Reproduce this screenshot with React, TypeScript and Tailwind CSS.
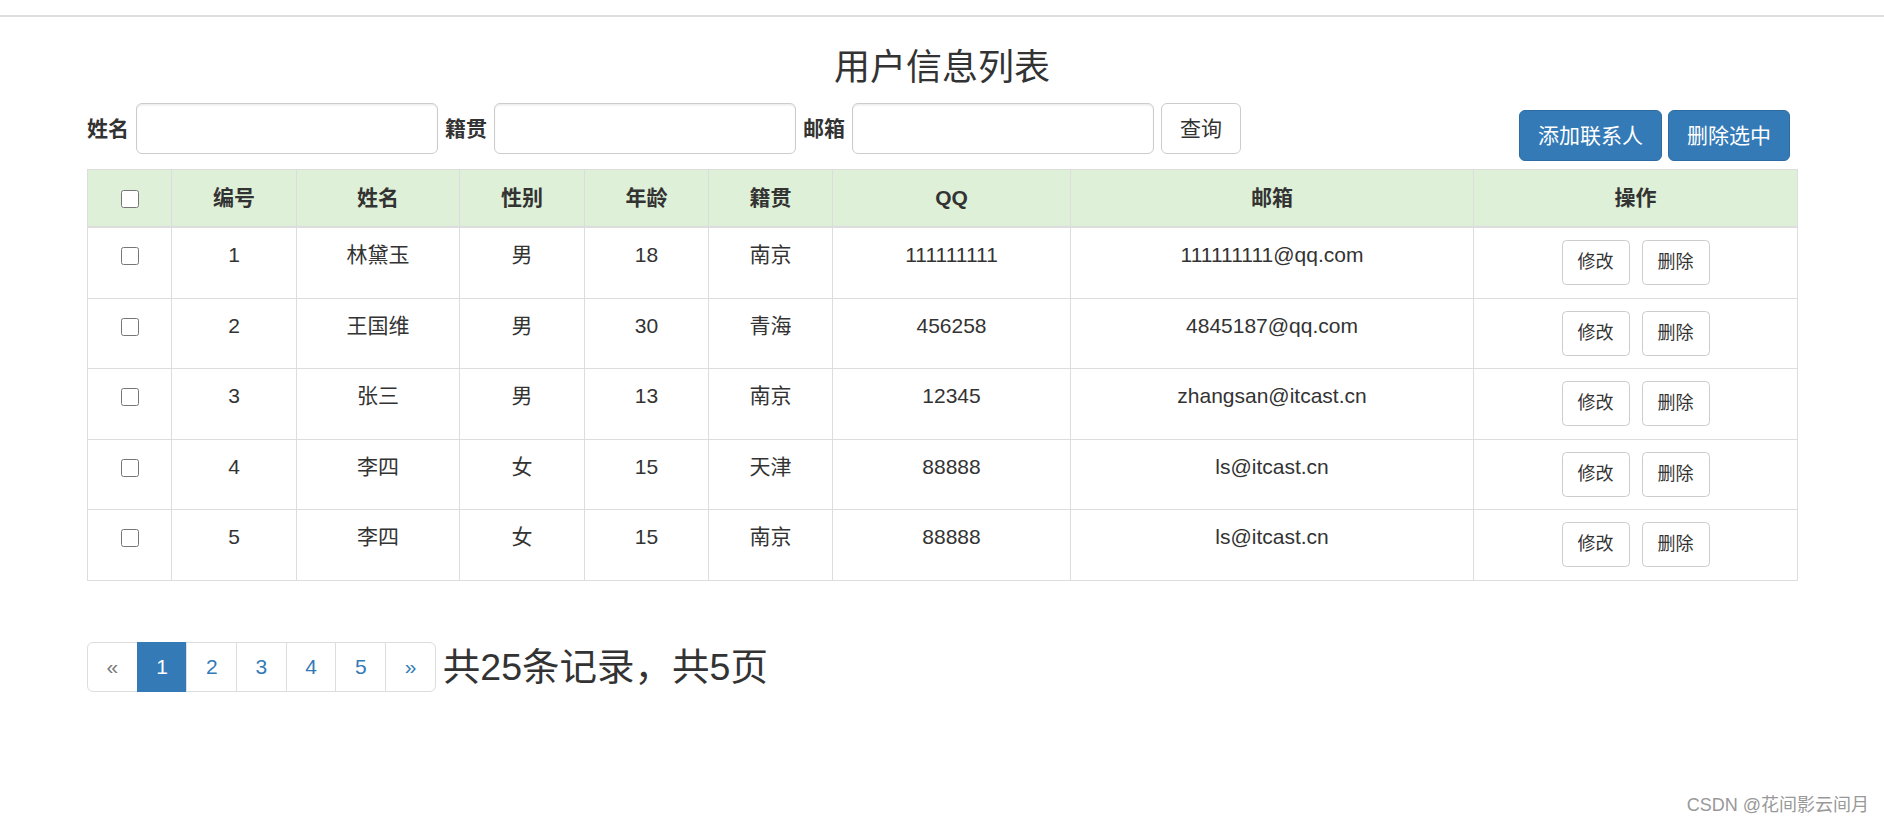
import React from "react";

const users = [
  { id: 1, name: "林黛玉", gender: "男", age: 18, address: "南京", qq: "111111111", email: "111111111@qq.com" },
  { id: 2, name: "王国维", gender: "男", age: 30, address: "青海", qq: "456258", email: "4845187@qq.com" },
  { id: 3, name: "张三", gender: "男", age: 13, address: "南京", qq: "12345", email: "zhangsan@itcast.cn" },
  { id: 4, name: "李四", gender: "女", age: 15, address: "天津", qq: "88888", email: "ls@itcast.cn" },
  { id: 5, name: "李四", gender: "女", age: 15, address: "南京", qq: "88888", email: "ls@itcast.cn" },
];

const colWidths = ["w-[84px]", "w-[125px]", "w-[163px]", "w-[125px]", "w-[124px]", "w-[124px]", "w-[238px]", "w-[403px]", "w-[324px]"];

function Field({ label }: { label: string }) {
  return (
    <>
      <label className="font-bold mr-[7px]">{label}</label>
      <input
        type="text"
        className="w-[302px] h-[51px] mr-[7px] border border-[#ccc] rounded-[6px] bg-white px-[18px] shadow-[inset_0_1.5px_1.5px_rgba(0,0,0,0.075)] outline-none"
      />
    </>
  );
}

export default function App() {
  const th = "border border-[#ddd] border-b-2 pt-[13px] pb-[13px] px-3 font-bold text-center align-bottom";
  const td = "border border-[#ddd] px-3 pt-3 pb-[12.5px] text-center align-top";
  const page = "h-[50px] px-[18.5px] py-[9px] border";

  return (
    <div className="relative min-h-screen bg-white text-[#333] text-[21px] leading-[30px] font-['Liberation_Sans','Noto_Sans_CJK_SC',sans-serif]">
      <div className="h-[17px] border-b-2 border-[#dedede]" />

      <div className="w-[1710px] mx-auto">
        <h3 className="mt-[31px] mb-[15px] text-[36px] leading-[40px] text-center font-normal">用户信息列表</h3>

        <div className="flex items-start justify-between">
          <form className="flex items-center h-[51px]">
            <Field label="姓名" />
            <Field label="籍贯" />
            <Field label="邮箱" />
            <button
              type="button"
              className="h-[51px] px-[18px] border border-[#ccc] rounded-[6px] bg-white text-[#333]"
            >
              查询
            </button>
          </form>

          <div className="flex gap-[6px] mt-[7px] mb-[8px] mr-[7px]">
            <button className="h-[51px] px-[18px] rounded-[6px] border border-[#2e6da4] bg-[#337ab7] text-white">
              添加联系人
            </button>
            <button className="h-[51px] px-[18px] rounded-[6px] border border-[#2e6da4] bg-[#337ab7] text-white">
              删除选中
            </button>
          </div>
        </div>

        <table className="w-full table-fixed border-collapse border border-[#ddd]">
          <colgroup>
            {colWidths.map((w, i) => (
              <col key={i} className={w} />
            ))}
          </colgroup>
          <thead>
            <tr className="bg-[#dff0d8]">
              <th className={th}>
                <input type="checkbox" className="w-[18px] h-[18px] m-0 align-middle" />
              </th>
              <th className={th}>编号</th>
              <th className={th}>姓名</th>
              <th className={th}>性别</th>
              <th className={th}>年龄</th>
              <th className={th}>籍贯</th>
              <th className={th}>QQ</th>
              <th className={th}>邮箱</th>
              <th className={th}>操作</th>
            </tr>
          </thead>
          <tbody>
            {users.map((u) => (
              <tr key={u.id}>
                <td className={td}>
                  <input type="checkbox" className="w-[18px] h-[18px] m-0 align-middle" />
                </td>
                <td className={td}>{u.id}</td>
                <td className={td}>{u.name}</td>
                <td className={td}>{u.gender}</td>
                <td className={td}>{u.age}</td>
                <td className={td}>{u.address}</td>
                <td className={td}>{u.qq}</td>
                <td className={td}>{u.email}</td>
                <td className={td}>
                  <div className="flex justify-center gap-[12px]">
                    <button className="w-[68px] h-[45px] text-[18px] leading-[27px] border border-[#ccc] rounded-[4.5px] bg-white text-[#333]">
                      修改
                    </button>
                    <button className="w-[68px] h-[45px] text-[18px] leading-[27px] border border-[#ccc] rounded-[4.5px] bg-white text-[#333]">
                      删除
                    </button>
                  </div>
                </td>
              </tr>
            ))}
          </tbody>
        </table>

        <div className="flex items-center mt-[61px]">
          <ul className="flex">
            <li className={`${page} border-[#ddd] rounded-l-[6px] text-[#777] bg-white`}>«</li>
            <li className={`${page} -ml-px border-[#337ab7] bg-[#337ab7] text-white`}>1</li>
            {[2, 3, 4, 5].map((n) => (
              <li key={n} className={`${page} -ml-px border-[#ddd] bg-white text-[#337ab7]`}>
                {n}
              </li>
            ))}
            <li className={`${page} -ml-px border-[#ddd] rounded-r-[6px] bg-white text-[#337ab7]`}>»</li>
          </ul>
          <span className="ml-[7px] text-[37.5px] leading-[42px]">共25条记录，共5页</span>
        </div>
      </div>

      <div className="absolute right-[15px] bottom-[6px] text-[18px] leading-[24px] text-[#999] [text-shadow:0_0_1px_#fff]">
        CSDN @花间影云间月
      </div>
    </div>
  );
}
